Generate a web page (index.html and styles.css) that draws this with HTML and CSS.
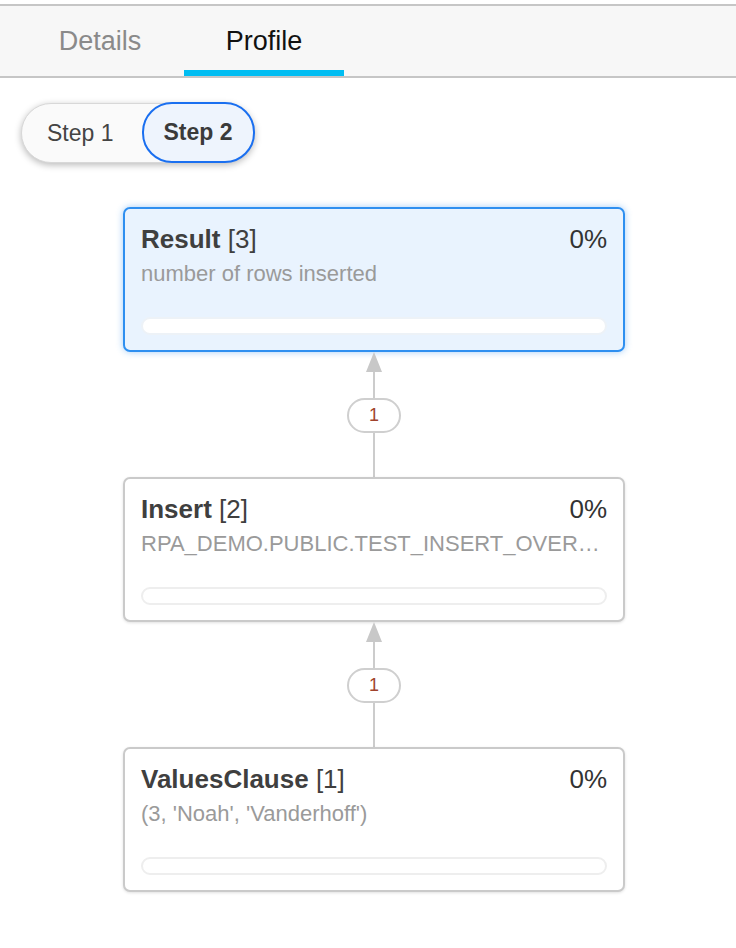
FILE: index.html
```html
<!DOCTYPE html>
<html>
<head>
<meta charset="utf-8">
<link rel="stylesheet" href="styles.css">
</head>
<body>
<div class="tabs">
  <div class="tab">Details</div>
  <div class="tab active">Profile</div>
</div>
<div class="steps">
  <div class="step">Step 1</div>
  <div class="step current">Step 2</div>
</div>
<div class="graph">
  <div class="node selected">
    <div class="node-head"><span class="node-title"><b>Result</b> [3]</span><span class="node-pct">0%</span></div>
    <div class="node-sub">number of rows inserted</div>
    <div class="bar"></div>
  </div>
  <div class="edge">
    <div class="arrow"></div>
    <div class="line top"></div>
    <div class="count">1</div>
    <div class="line bottom"></div>
  </div>
  <div class="node">
    <div class="node-head"><span class="node-title"><b>Insert</b> [2]</span><span class="node-pct">0%</span></div>
    <div class="node-sub">RPA_DEMO.PUBLIC.TEST_INSERT_OVER…</div>
    <div class="bar"></div>
  </div>
  <div class="edge">
    <div class="arrow"></div>
    <div class="line top"></div>
    <div class="count">1</div>
    <div class="line bottom"></div>
  </div>
  <div class="node">
    <div class="node-head"><span class="node-title"><b>ValuesClause</b> [1]</span><span class="node-pct">0%</span></div>
    <div class="node-sub">(3, 'Noah', 'Vanderhoff')</div>
    <div class="bar"></div>
  </div>
</div>
</body>
</html>
```
FILE: styles.css
```css
* { box-sizing: border-box; }
html, body { margin: 0; padding: 0; background: #fff; }
body {
  font-family: "Liberation Sans", Arial, Helvetica, sans-serif;
  color: #444;
  width: 736px;
  height: 948px;
  overflow: hidden;
}
.tabs {
  margin-top: 4px;
  border-top: 2px solid #c6c6c6;
  border-bottom: 2px solid #c6c6c6;
  background: #f7f7f7;
  height: 74px;
  display: flex;
  gap: 4px;
  padding-left: 20px;
}
.tab {
  width: 160px;
  height: 70px;
  text-align: center;
  font-size: 27px;
  line-height: 27px;
  padding-top: 22px;
  color: #8a8a8a;
  border-bottom: 6px solid transparent;
}
.tab.active {
  color: #111;
  border-bottom-color: #00bdf2;
}
.steps {
  display: inline-flex;
  align-items: stretch;
  margin: 25px 0 0 21px;
  height: 60px;
  border-radius: 30px;
  background: #fafafa;
  border: 1px solid #d8d8d8;
  box-shadow: 0 2px 7px rgba(0, 0, 0, 0.28);
}
.step {
  display: flex;
  align-items: center;
  font-size: 23px;
  color: #444;
  padding: 0 28px 0 25px;
}
.step.current {
  font-weight: bold;
  padding: 0 18px;
  width: 113px;
  justify-content: center;
  margin: -2px -1px -1px 0;
  border: 2px solid #1a6ff0;
  border-radius: 30px;
  background: #eef4fd;
  color: #3a3a3a;
}
.graph {
  display: flex;
  flex-direction: column;
  align-items: center;
  padding-left: 12px;
  margin-top: 44px;
}
.node {
  width: 502px;
  border: 2px solid #cacaca;
  border-radius: 7px;
  background: #fff;
  padding: 15px 16px 15px 16px;
  box-shadow: 0 1px 3px rgba(0, 0, 0, 0.12);
}
.node.selected {
  border-color: #2e8ff0;
  background: #e9f3fe;
  box-shadow: 0 0 7px rgba(46, 143, 240, 0.45);
}
.node-head {
  display: flex;
  justify-content: space-between;
  font-size: 26px;
  line-height: 30px;
  color: #3f3f3f;
}
.node-title b { font-weight: bold; }
.node-pct { color: #333; }
.node-sub {
  margin-top: 7px;
  font-size: 22px;
  line-height: 26px;
  color: #9a9a9a;
  white-space: nowrap;
  overflow: hidden;
  text-overflow: ellipsis;
}
.bar {
  margin-top: 30px;
  height: 18px;
  border-radius: 9px;
  background: #fff;
  border: 2px solid #eeeeee;
}
.node.selected .bar { border-color: #edf2f7; }
.edge {
  display: flex;
  flex-direction: column;
  align-items: center;
  height: 125px;
}
.arrow {
  width: 0;
  height: 0;
  border-left: 8px solid transparent;
  border-right: 8px solid transparent;
  border-bottom: 20px solid #c8c8c8;
}
.line {
  width: 2px;
  background: #cccccc;
}
.line.top { height: 26px; }
.line.bottom { flex: 1; }
.count {
  width: 54px;
  height: 35px;
  border: 2px solid #cfcfcf;
  border-radius: 18px;
  background: #fff;
  display: flex;
  align-items: center;
  justify-content: center;
  font-size: 18px;
  color: #a0432c;
}
```
